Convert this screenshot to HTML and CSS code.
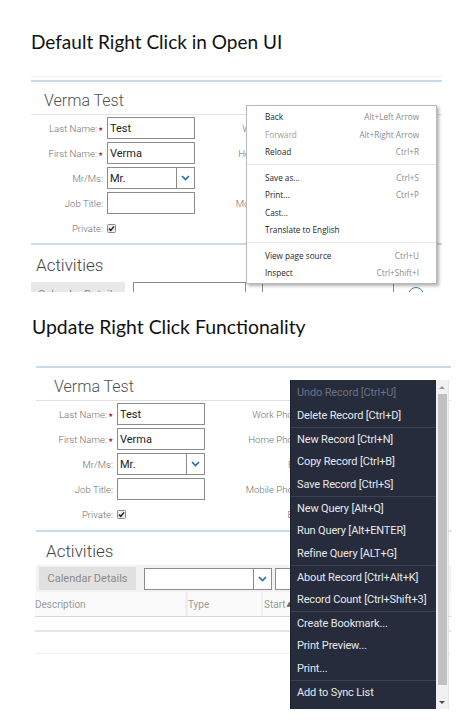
FILE: index.html
```html
<!DOCTYPE html>
<html>
<head>
<meta charset="utf-8">
<title>Right Click in Open UI</title>
<link rel="stylesheet" href="styles.css">
</head>
<body>

<section class="shot shot-default">
  <h1 class="caption">Default Right Click in Open UI</h1>
  <div class="faint-rule"></div>
  <div class="app">
    <div class="applet-title">Verma Test</div>
    <div class="form">
      <div class="lbl">Last Name:<span class="req">★</span></div>
      <div class="field">Test</div>
      <div class="lbl rlbl">Work Phone #:</div>
      <div class="rfield"></div>

      <div class="lbl">First Name:<span class="req">★</span></div>
      <div class="field">Verma</div>
      <div class="lbl rlbl">Home Phone #:</div>
      <div class="rfield"></div>

      <div class="lbl">Mr/Ms:</div>
      <div class="field select"><span class="val">Mr.</span><span class="chev"><svg width="9" height="6" viewBox="0 0 9 6"><polyline points="1,1 4.5,4.5 8,1" fill="none" stroke="#2d6aa6" stroke-width="1.7"/></svg></span></div>
      <div class="lbl rlbl">Fax #:</div>
      <div class="rfield"></div>

      <div class="lbl">Job Title:</div>
      <div class="field"></div>
      <div class="lbl rlbl">Mobile Phone #:</div>
      <div class="rfield"></div>

      <div class="lbl">Private:</div>
      <div class="check"><svg width="9" height="9" viewBox="0 0 9 9"><rect x="0.5" y="0.5" width="8" height="8" rx="1" fill="#eee" stroke="#8a8a8a"/><polyline points="2,4.6 3.8,6.4 7,2.4" fill="none" stroke="#222" stroke-width="1.5"/></svg></div>
      <div class="lbl rlbl">Email:</div>
      <div class="rfield"></div>
    </div>
    <div class="blue-rule"></div>
    <div class="section-title">Activities</div>
    <div class="toolbar toolbar-cut">
      <div class="btn">Calendar Details</div>
      <div class="box box-a"></div>
      <div class="box box-b"></div>
      <div class="circle"></div>
    </div>

    <div class="ctx-chrome">
      <div class="citem"><span>Back</span><span class="sc">Alt+Left Arrow</span></div>
      <div class="citem dis"><span>Forward</span><span class="sc">Alt+Right Arrow</span></div>
      <div class="citem"><span>Reload</span><span class="sc">Ctrl+R</span></div>
      <div class="csep"></div>
      <div class="citem"><span>Save as...</span><span class="sc">Ctrl+S</span></div>
      <div class="citem"><span>Print...</span><span class="sc">Ctrl+P</span></div>
      <div class="citem"><span>Cast...</span></div>
      <div class="citem"><span>Translate to English</span></div>
      <div class="csep"></div>
      <div class="citem"><span>View page source</span><span class="sc">Ctrl+U</span></div>
      <div class="citem"><span>Inspect</span><span class="sc">Ctrl+Shift+I</span></div>
    </div>
  </div>
</section>

<section class="shot shot-update">
  <h1 class="caption">Update Right Click Functionality</h1>
  <div class="app">
    <div class="applet-title">Verma Test</div>
    <div class="form">
      <div class="lbl">Last Name:<span class="req">★</span></div>
      <div class="field">Test</div>
      <div class="lbl rlbl">Work Phone #:</div>
      <div class="rfield"></div>

      <div class="lbl">First Name:<span class="req">★</span></div>
      <div class="field">Verma</div>
      <div class="lbl rlbl">Home Phone #:</div>
      <div class="rfield"></div>

      <div class="lbl">Mr/Ms:</div>
      <div class="field select"><span class="val">Mr.</span><span class="chev"><svg width="9" height="6" viewBox="0 0 9 6"><polyline points="1,1 4.5,4.5 8,1" fill="none" stroke="#2d6aa6" stroke-width="1.7"/></svg></span></div>
      <div class="lbl rlbl">Fax #:</div>
      <div class="rfield"></div>

      <div class="lbl">Job Title:</div>
      <div class="field"></div>
      <div class="lbl rlbl">Mobile Phone #:</div>
      <div class="rfield"></div>

      <div class="lbl">Private:</div>
      <div class="check"><svg width="9" height="9" viewBox="0 0 9 9"><rect x="0.5" y="0.5" width="8" height="8" rx="1" fill="#eee" stroke="#8a8a8a"/><polyline points="2,4.6 3.8,6.4 7,2.4" fill="none" stroke="#222" stroke-width="1.5"/></svg></div>
      <div class="lbl rlbl">Email:</div>
      <div class="rfield"></div>
    </div>
    <div class="blue-rule"></div>
    <div class="section-title">Activities</div>
    <div class="toolbar toolbar-full">
      <div class="btn">Calendar Details</div>
      <div class="box dd"><span class="chev"><svg width="9" height="6" viewBox="0 0 9 6"><polyline points="1,1 4.5,4.5 8,1" fill="none" stroke="#2d6aa6" stroke-width="1.7"/></svg></span></div>
      <div class="box box-c"></div>
    </div>
    <div class="grid-head">
      <div class="gh gh-desc">Description</div>
      <div class="gh gh-type">Type</div>
      <div class="gh gh-start">Start<span class="tri">▲</span></div>
    </div>
    <div class="grid-row r1"></div>
    <div class="grid-row r2"></div>

    <div class="ctx-dark">
      <div class="dmenu">
        <div class="ditem dis">Undo Record [Ctrl+U]</div>
        <div class="ditem">Delete Record [Ctrl+D]</div>
        <div class="ditem sep">New Record [Ctrl+N]</div>
        <div class="ditem">Copy Record [Ctrl+B]</div>
        <div class="ditem">Save Record [Ctrl+S]</div>
        <div class="ditem sep">New Query [Alt+Q]</div>
        <div class="ditem">Run Query [Alt+ENTER]</div>
        <div class="ditem">Refine Query [ALT+G]</div>
        <div class="ditem sep">About Record [Ctrl+Alt+K]</div>
        <div class="ditem">Record Count [Ctrl+Shift+3]</div>
        <div class="ditem sep">Create Bookmark...</div>
        <div class="ditem">Print Preview...</div>
        <div class="ditem">Print...</div>
        <div class="ditem sep">Add to Sync List</div>
      </div>
      <div class="scrollbar">
        <div class="arrow up"></div>
        <div class="thumb"></div>
        <div class="arrow down"></div>
      </div>
    </div>
  </div>
</section>

</body>
</html>
```

FILE: styles.css
```css
html, body {
  margin: 0;
  padding: 0;
  background: #ffffff;
}
body {
  width: 474px;
  height: 720px;
  overflow: hidden;
  font-family: Roboto, "Liberation Sans", sans-serif;
}

.caption {
  margin: 0;
  font-family: Lato, "Open Sans", sans-serif;
  font-weight: 400;
  font-size: 19px;
  line-height: 24px;
  color: #111;
}

/* ---------- section 1 ---------- */
.shot-default .caption {
  margin-top: 30px;
  padding-left: 31px;
}
.faint-rule {
  margin: 22px 0 0 31px;
  width: 411px;
  height: 1px;
  background: #f1f1f1;
}
.app {
  position: relative;
  border-top: 2px solid #c8dbea;
}
.shot-default .app {
  margin: 3px 0 0 31px;
  width: 411px;
  height: 210px;
  overflow: hidden;
  --lw: 72px;
}
.shot-update .caption {
  margin-top: 23px;
  padding-left: 32px;
  font-size: 19.4px;
}
.shot-update .app {
  margin: 27px 0 0 36px;
  width: 415px;
  --lw: 77px;
}

.applet-title {
  padding: 9px 0 3px 13px;
  font-size: 16px;
  line-height: 20px;
  font-weight: 300;
  color: #505050;
  border-bottom: 1px solid #e2e2e2;
}
.shot-update .applet-title {
  padding-left: 18px;
}

.form {
  margin-top: 2px;
  display: grid;
  grid-template-columns: var(--lw) 88px 104px 120px;
  grid-auto-rows: 22px;
  column-gap: 4px;
  row-gap: 3px;
}
.lbl {
  display: flex;
  align-items: center;
  justify-content: flex-end;
  font-size: 9.6px;
  font-weight: 300;
  color: #6f6f6f;
  white-space: nowrap;
}
.req {
  color: #b3262a;
  font-size: 6px;
  margin-left: 1px;
  font-family: "DejaVu Sans", sans-serif;
}
.field {
  box-sizing: border-box;
  border: 1px solid #8c8c8c;
  display: flex;
  align-items: center;
  padding-left: 2px;
  font-size: 11px;
  color: #222;
}
.field.select {
  padding-left: 0;
}
.field.select .val {
  flex: 1;
  padding-left: 2px;
}
.chev {
  width: 17px;
  align-self: stretch;
  border-left: 1px solid #8c8c8c;
  display: flex;
  align-items: center;
  justify-content: center;
}
.rfield {
  box-sizing: border-box;
  border: 1px solid #8c8c8c;
}
.check {
  display: flex;
  align-items: center;
}
.blue-rule {
  margin-top: 4px;
  height: 2px;
  background: #c8dbea;
}
.shot-update .blue-rule {
  margin-top: 5px;
}
.section-title {
  margin-top: 10px;
  padding-left: 5px;
  font-size: 17px;
  line-height: 20px;
  font-weight: 300;
  color: #444;
}
.shot-update .section-title {
  margin-top: 9px;
  padding-left: 10px;
}

/* toolbar */
.toolbar {
  display: flex;
  align-items: center;
}
.toolbar > * {
  flex-shrink: 0;
}
.toolbar-cut {
  margin-top: 7px;
  height: 24px;
  align-items: flex-start;
}
.btn {
  box-sizing: border-box;
  font-size: 11px;
  color: #8a8a8a;
  display: flex;
  align-items: center;
  justify-content: center;
}
.toolbar-cut .btn {
  width: 94px;
  height: 24px;
  background: #e8e8e8;
  align-items: flex-start;
  padding-top: 6px;
}
.box {
  box-sizing: border-box;
  border: 1px solid #8c8c8c;
  height: 22px;
}
.box-a {
  margin-left: 8px;
  width: 113px;
}
.box-b {
  margin-left: 16px;
  width: 132px;
}
.circle {
  margin: 5px 0 0 14px;
  width: 14px;
  height: 14px;
  border: 1.5px solid #4a7fb5;
  border-radius: 50%;
}

.toolbar-full {
  margin-top: 4px;
  height: 27px;
  background: #f2f2f2;
  box-sizing: border-box;
  padding-left: 3px;
}
.toolbar-full .btn {
  width: 97px;
  height: 23px;
  background: #e1e1e1;
}
.dd {
  margin-left: 8px;
  width: 128px;
  display: flex;
  justify-content: flex-end;
  background: #fff;
}
.box-c {
  margin-left: 3px;
  width: 60px;
  background: #fff;
}

.grid-head {
  display: flex;
  height: 24px;
  margin-left: -1px;
  background: #fafafa;
  border-bottom: 1px solid #d8d8d8;
}
.gh {
  display: flex;
  align-items: center;
  font-size: 10px;
  color: #9a9a9a;
  box-sizing: border-box;
}
.gh-desc {
  width: 150px;
}
.gh-type {
  width: 76px;
  border-left: 3px solid #efefef;
}
.gh-start {
  padding-left: 1px;
  border-left: 2px solid #efefef;
}
.tri {
  font-size: 7px;
  color: #666;
  margin-left: 1px;
  font-family: "DejaVu Sans", sans-serif;
}
.grid-row {
  margin-left: -1px;
}
.r1 {
  height: 13px;
  border-bottom: 2px solid #e4e4e4;
}
.r2 {
  height: 21px;
  border-bottom: 1px solid #efefef;
}

/* chrome context menu */
.ctx-chrome {
  position: absolute;
  left: 215px;
  top: 23px;
  width: 191px;
  box-sizing: border-box;
  padding: 2px 0 1px;
  background: #fff;
  border: 1px solid #b9b9b9;
  box-shadow: 2px 2px 3px rgba(0, 0, 0, 0.3);
  font-family: "Open Sans", "Noto Sans", sans-serif;
  font-size: 8.2px;
  color: #1e1e1e;
}
.citem {
  display: flex;
  justify-content: space-between;
  height: 17.5px;
  align-items: center;
  padding: 0 17px 0 18px;
}
.citem.dis {
  color: #9c9c9c;
}
.citem .sc {
  color: #8a8a8a;
}
.csep {
  height: 1px;
  margin: 3px 0 4px;
  background: #e9e9e9;
}

/* dark context menu */
.ctx-dark {
  position: absolute;
  left: 254px;
  top: 12px;
  height: 329px;
  display: flex;
}
.dmenu {
  width: 146px;
  box-sizing: border-box;
  padding-top: 1px;
  background: #262c3b;
  border-left: 1px solid #1b202b;
}
.ditem {
  height: 23px;
  box-sizing: border-box;
  padding-left: 6px;
  display: flex;
  align-items: center;
  font-size: 11px;
  color: #e6e8ec;
  white-space: nowrap;
  letter-spacing: -0.15px;
}
.ditem.sep {
  border-top: 1px solid #3a4152;
}
.ditem.dis {
  color: #6b7182;
}
.scrollbar {
  width: 12px;
  background: #f1f1f1;
  display: flex;
  flex-direction: column;
  align-items: center;
  border-right: 1px solid #e4e4e4;
}
.arrow {
  width: 0;
  height: 0;
  border-left: 3px solid transparent;
  border-right: 3px solid transparent;
}
.arrow.up {
  margin-top: 6px;
  border-bottom: 3px solid #9a9a9a;
}
.arrow.down {
  margin-top: 16px;
  border-top: 3px solid #505050;
}
.thumb {
  margin-top: 5px;
  width: 9px;
  height: 291px;
  background: #c1c1c1;
}
```
